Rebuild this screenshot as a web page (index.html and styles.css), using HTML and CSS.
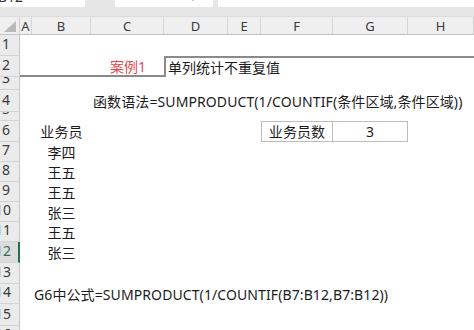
FILE: index.html
```html
<!DOCTYPE html>
<html lang="zh-CN">
<head>
  <meta charset="UTF-8">
  <meta name="viewport" content="width=device-width,initial-scale=1.0">
  <title>单列统计不重复值</title>
  <link rel="stylesheet" href="styles.css">
</head>
<body>
  <!-- 编辑栏 -->
  <div class="toolbar">
    <div class="box box-name"><span class="cut-text">B12</span></div>
    <div class="box box-mid"><span class="cut-text arrow">▾</span></div>
    <div class="box box-formula"></div>
  </div>

  <div class="sheet">
    <!-- 列标 -->
    <div class="row head-row">
      <div class="corner"><span class="tri"></span></div>
      <div class="col-head">A</div>
      <div class="col-head">B</div>
      <div class="col-head">C</div>
      <div class="col-head">D</div>
      <div class="col-head">E</div>
      <div class="col-head">F</div>
      <div class="col-head">G</div>
      <div class="col-head">H</div>
    </div>

    <div class="row r1"><div class="rh"><span>1</span></div></div>

    <div class="row r2">
      <div class="rh"><span>2</span></div>
      <div class="band-left"><span class="title-red">案例1</span></div>
      <div class="band-right">单列统计不重复值</div>
    </div>

    <div class="row r3"><div class="rh"><span>3</span></div></div>

    <div class="row r4">
      <div class="rh"><span>4</span></div>
      <div class="cell from-c">函数语法=SUMPRODUCT(1/COUNTIF(条件区域,条件区域))</div>
    </div>

    <div class="row r5"><div class="rh"><span>5</span></div></div>

    <div class="row r6">
      <div class="rh"><span>6</span></div>
      <div class="cell col-b center">业务员</div>
      <div class="cell col-f center boxed">业务员数</div>
      <div class="cell col-g center boxed boxed-next">3</div>
    </div>

    <div class="row r7"><div class="rh"><span>7</span></div><div class="cell col-b center">李四</div></div>
    <div class="row r8"><div class="rh"><span>8</span></div><div class="cell col-b center">王五</div></div>
    <div class="row r9"><div class="rh"><span>9</span></div><div class="cell col-b center">王五</div></div>
    <div class="row r10"><div class="rh two"><span>10</span></div><div class="cell col-b center">张三</div></div>
    <div class="row r11"><div class="rh two"><span>11</span></div><div class="cell col-b center">王五</div></div>
    <div class="row r12"><div class="rh two active"><span>12</span></div><div class="cell col-b center">张三</div></div>
    <div class="row r13"><div class="rh two"><span>13</span></div></div>

    <div class="row r14">
      <div class="rh two"><span>14</span></div>
      <div class="cell from-b">G6中公式=SUMPRODUCT(1/COUNTIF(B7:B12,B7:B12))</div>
    </div>

    <div class="row r15"><div class="rh two"><span>15</span></div></div>
    <div class="row r16"><div class="rh two"><span>16</span></div></div>
  </div>
</body>
</html>
```

FILE: styles.css
```css
* {
  box-sizing: border-box;
}
body {
  margin: 0;
  padding: 0;
  background: #fff;
  color: #1c1c1c;
  font-family: 'Noto Sans', 'Noto Sans CJK SC', sans-serif;
  font-size: 14px;
  overflow: hidden;
}

/* 编辑栏 */
.toolbar {
  display: flex;
  height: 17px;
  background: #e6e6e6;
  border-bottom: 1px solid #dcdcdc;
}
.box {
  height: 7px;
  background: #fff;
  overflow: hidden;
  position: relative;
}
.box-name {
  width: 85px;
}
.box-mid {
  width: 98px;
  margin-left: 30px;
}
.box-formula {
  flex: 1;
  margin-left: 5px;
}
.cut-text {
  display: block;
  line-height: 14px;
  margin-top: -10px;
  margin-left: -2px;
  color: #333;
}
.arrow {
  margin-left: 75px;
  font-size: 12px;
}

/* 表格 */
.row {
  display: grid;
  grid-template-columns: 20px 12px 59px 73px 64px 33px 72px 75px 1fr;
  grid-template-rows: 100%;
  overflow: hidden;
}
.head-row {
  height: 18px;
  background: #efefef;
  border-bottom: 1px solid #c4c4c4;
}
.corner {
  position: relative;
  border-right: 1px solid #d0d0d0;
}
.tri {
  position: absolute;
  left: 4px;
  top: 4px;
  width: 0;
  height: 0;
  border-left: 12px solid transparent;
  border-bottom: 11px solid #b9b9b9;
}
.col-head {
  border-right: 1px solid #d4d4d4;
  text-align: center;
  font-size: 13px;
  line-height: 18px;
  color: #3a3a3a;
  overflow: hidden;
}

/* 行号 */
.rh {
  grid-column: 1;
  background: #ebebeb;
  border-right: 1px solid #c4c4c4;
  border-bottom: 1px solid #d3d3d3;
  display: flex;
  align-items: flex-end;
  overflow: hidden;
  color: #3a3a3a;
}
.rh span {
  display: block;
  line-height: 20px;
  margin-left: 2px;
  margin-bottom: 1px;
}
.rh.two span {
  margin-left: -5px;
}
.rh.active {
  background: #dcdcdc;
  border-right: 2px solid #217346;
  color: #2f6e4f;
}

.r1, .r2, .r6, .r12, .r13 { height: 21px; }
.r3 { height: 13px; }
.r4 { height: 22px; }
.r5 { height: 9px; }
.r7, .r8, .r9, .r10, .r11, .r14 { height: 20px; }
.r15 { height: 22px; }
.r16 { height: 20px; }

.cell {
  white-space: nowrap;
  display: flex;
  align-items: center;
  line-height: 16px;
  padding-top: 1px;
  letter-spacing: 0.1px;
}
.center {
  justify-content: center;
}
.col-b { grid-column: 3; }
.col-f { grid-column: 7; }
.col-g { grid-column: 8; }
.from-b {
  grid-column: 3 / -1;
  padding-left: 2px;
}
.from-c {
  grid-column: 4 / -1;
  padding-left: 2px;
}

/* 标题行 */
.band-left {
  grid-column: 2 / 5;
  border-bottom: 2px solid #8a8a8a;
  display: flex;
  align-items: center;
  justify-content: flex-end;
  line-height: 16px;
  padding-right: 18px;
  padding-top: 2px;
}
.title-red {
  color: #e8464e;
}
.band-right {
  grid-column: 5 / -1;
  border-top: 2px solid #8a8a8a;
  border-left: 2px solid #8a8a8a;
  display: flex;
  align-items: center;
  line-height: 16px;
  padding-left: 2px;
  white-space: nowrap;
}

/* 结果框 */
.boxed {
  border: 1px solid #bdbdbd;
  padding-top: 0;
}
.boxed-next {
  border-left: none;
}
```
